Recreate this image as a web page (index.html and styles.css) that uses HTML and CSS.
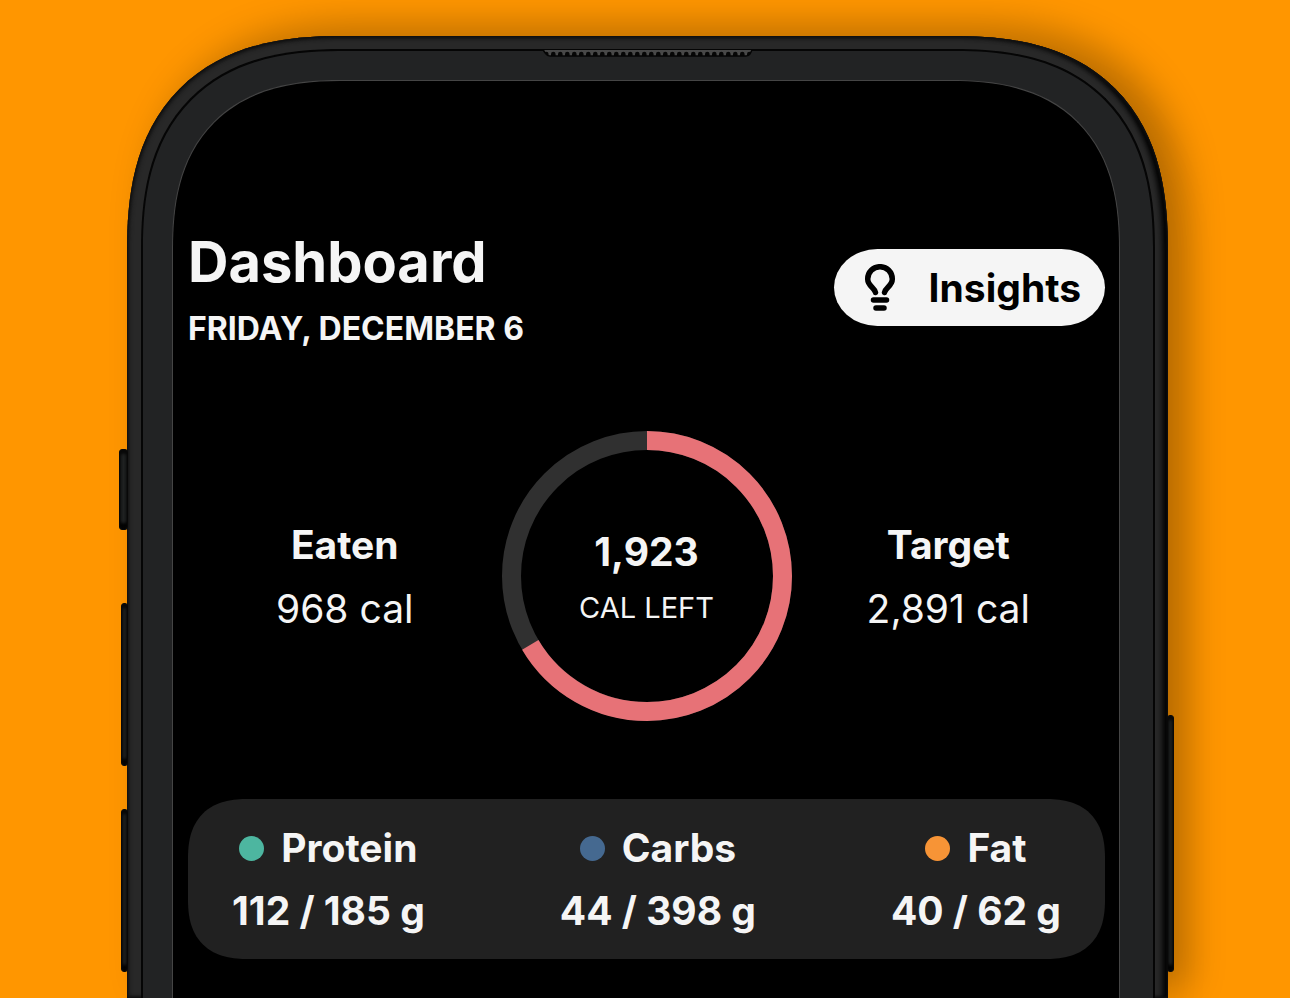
FILE: index.html
```
<!DOCTYPE html>
<html lang="en">
<head>
<meta charset="utf-8">
<meta name="viewport" content="width=device-width, initial-scale=1">
<title>Dashboard</title>
<link rel="stylesheet" href="styles.css">
</head>
<body>
<div class="phone">
  <span class="key key-silent"></span>
  <span class="key key-up"></span>
  <span class="key key-down"></span>
  <span class="key key-power"></span>
  <div class="bezel">
    <svg class="speaker" width="210" height="8" viewBox="0 0 210 8" aria-hidden="true">
      <defs>
        <pattern id="mesh" width="7" height="8" patternUnits="userSpaceOnUse">
          <rect width="7" height="8" fill="#484848"/>
          <path d="M1 6V4A2.300 2.300 0 0 1 5.600 4V6Z" fill="#060606"/>
        </pattern>
      </defs>
      <path d="M1 0H209L207 4Q206 6 203 6H7Q4 6 3 4Z" fill="url(#mesh)"/>
      <path d="M0 0L3 4Q4 6 7 6H203Q206 6 207 4L209 0" fill="none" stroke="#050505" stroke-width="1.5"/>
    </svg>
    <main class="screen">
      <header class="top">
        <div>
          <h1 class="title">Dashboard</h1>
          <p class="date">FRIDAY, DECEMBER 6</p>
        </div>
        <button class="insights" type="button">
          <svg width="32" height="48" viewBox="0 0 32 48" fill="none" stroke="#000" stroke-width="5.500" stroke-linecap="round" aria-hidden="true">
            <path d="M11.500 28.500C10.500 23.500 3.700 22 3.700 15A12.300 12.300 0 0 1 28.300 15C28.300 22 21.500 23.500 20.500 28.500"/>
            <path d="M9.500 36H22.500M12 44H20"/>
          </svg>
          Insights
        </button>
      </header>
      <section class="summary" aria-label="Calories">
        <div class="stat">
          <h2 class="label">Eaten</h2>
          <p class="value">968 cal</p>
        </div>
        <div class="ring">
          <svg class="ring-art" viewBox="0 0 290 290" fill="none" stroke-width="19" aria-hidden="true">
            <circle cx="145" cy="145" r="135.500" stroke="#303030"/>
            <circle cx="145" cy="145" r="135.500" stroke="#e77277" pathLength="2891" stroke-dasharray="1923 968" transform="rotate(-90 145 145)"/>
          </svg>
          <div class="ring-text">
            <p class="label">1,923</p>
            <p class="caption">CAL LEFT</p>
          </div>
        </div>
        <div class="stat">
          <h2 class="label">Target</h2>
          <p class="value">2,891 cal</p>
        </div>
      </section>
      <section class="macros" aria-label="Macros">
        <div class="macro">
          <h2 class="label macro-name"><span class="dot protein"></span>Protein</h2>
          <p class="label">112 / 185 g</p>
        </div>
        <div class="macro">
          <h2 class="label macro-name"><span class="dot carbs"></span>Carbs</h2>
          <p class="label">44 / 398 g</p>
        </div>
        <div class="macro">
          <h2 class="label macro-name"><span class="dot fat"></span>Fat</h2>
          <p class="label">40 / 62 g</p>
        </div>
      </section>
    </main>
  </div>
</div>
</body>
</html>
```
FILE: styles.css
```
* { box-sizing: border-box; }
body, h1, h2, p { margin: 0; }
body {
  display: flex;
  min-height: 100vh;
  padding: 36px 122px 0 127px;
  overflow: hidden auto;
  background: #ff9600;
  color: #f5f5f5;
  font-family: Inter, "Liberation Sans", sans-serif;
}
.phone {
  position: relative;
  display: flex;
  flex: 1;
  padding: 13px 13px 0 14px;
  border-radius: 184px 184px 0 0;
  background: #282828;
  box-shadow:
    inset 0 0 2px 1px #101010,
    inset 2px 2px 4px #151515,
    inset -6px 0 5px #050505,
    20px -12px 36px rgba(0, 0, 0, .25),
    20px 24px 36px -4px rgba(0, 0, 0, .06);
}
.bezel {
  position: relative;
  display: flex;
  flex: 1;
  padding: 29px 33px 0 29px;
  border: 2px solid #050505;
  border-bottom: 0;
  border-radius: 171px 171px 0 0;
  background: #222324;
}
.speaker {
  position: absolute;
  top: -1px;
  left: 50%;
  transform: translateX(-50%);
}
.screen {
  flex: 1;
  padding: 153px 14px 39px 15px;
  border: 1px solid #454545;
  border-bottom: 0;
  border-radius: 146px 146px 0 0;
  background: #000;
}
.key {
  position: absolute;
  border: 1px solid #080808;
  border-radius: 3px;
  background: #1f2121;
  box-shadow: inset 0 4px 3px #080808, inset 0 -6px 3px #030303;
}
.key-silent { top: 413px; left: -8px; width: 9px; height: 81px; }
.key-up { top: 567px; left: -6px; width: 7px; height: 163px; }
.key-down { top: 773px; left: -6px; width: 7px; height: 163px; }
.key-power { top: 679px; right: -6px; width: 7px; height: 257px; }
.top {
  display: flex;
  justify-content: space-between;
  align-items: flex-start;
}
.title { font-size: 56px; line-height: 56px; font-weight: 700; }
.date { margin-top: 19px; font-size: 32px; line-height: 40px; font-weight: 700; }
.insights {
  display: flex;
  align-items: center;
  gap: 33px;
  height: 77px;
  margin-top: 15px;
  padding: 0 24px 0 30px;
  border: 0;
  border-radius: 44px / 39px;
  background: #f5f5f5;
  color: #000;
  font: 700 39px/48px Inter, "Liberation Sans", sans-serif;
}
.summary {
  display: grid;
  grid-template-columns: 1fr 290px 1fr;
  align-items: center;
  margin-top: 82px;
  text-align: center;
}
.label { font-size: 39px; line-height: 48px; font-weight: 700; }
.value { margin-top: 16px; font-size: 39px; line-height: 48px; }
.stat { padding-top: 2px; }
.ring { display: grid; place-items: center; }
.ring-art, .ring-text { grid-area: 1 / 1; }
.ring-text { padding-top: 4px; }
.ring-art { display: block; width: 290px; height: 290px; }
.caption { margin-top: 12px; font-size: 29px; line-height: 40px; }
.macros {
  display: flex;
  justify-content: space-between;
  margin-top: 78px;
  padding: 25px 44px 24px;
  border-radius: 48px;
  background: #212121;
}
.macro { text-align: center; }
.macro .label + .label { margin-top: 15px; }
.macro-name { display: flex; justify-content: center; align-items: center; gap: 17px; }
.dot { width: 25px; height: 25px; border-radius: 50%; }
.protein { background: #4db6a0; }
.carbs { background: #456990; }
.fat { background: #f79436; }

/* Continuous-curvature corners where the browser can draw them */
@supports (corner-shape: superellipse(1.3)) {
  .phone, .bezel, .screen, .macros { corner-shape: superellipse(1.3); }
  .phone { border-radius: 215px 215px 0 0; }
  .bezel { border-radius: 201px 201px 0 0; }
  .screen { border-radius: 170px 170px 0 0; }
  .macros { border-radius: 60px; }
}
```
